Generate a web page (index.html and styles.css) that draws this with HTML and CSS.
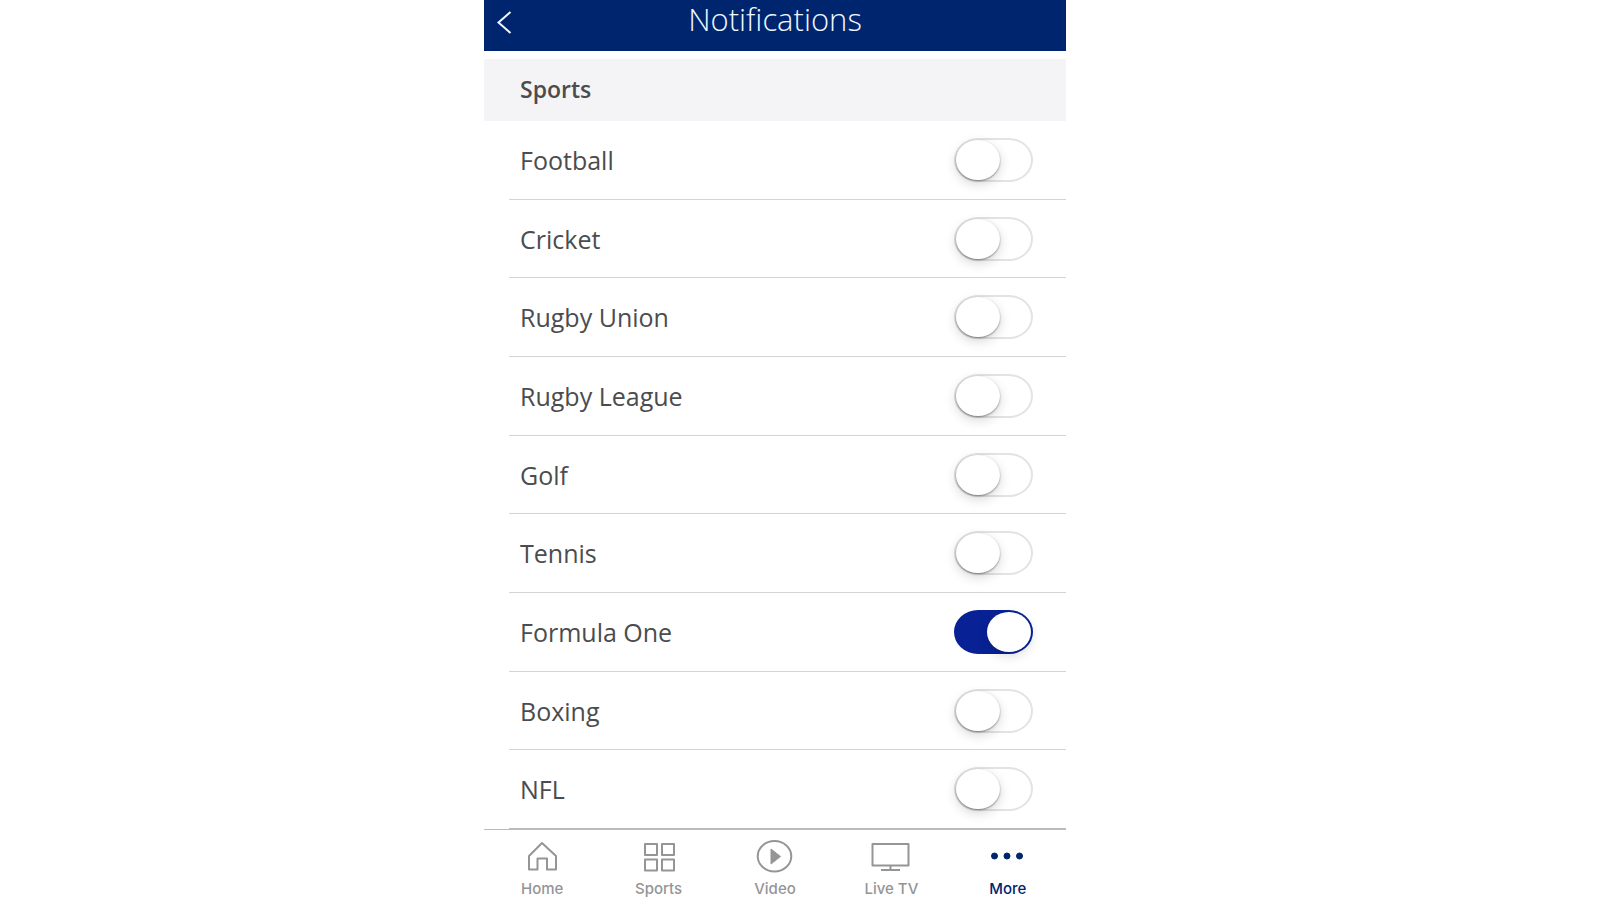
FILE: index.html
```
<!DOCTYPE html>
<html lang="en">
<head>
  <meta charset="UTF-8">
  <meta name="viewport" content="width=device-width, initial-scale=1.0">
  <title>Notifications</title>
  <link rel="stylesheet" href="styles.css">
</head>
<body>
  <div class="app">
    <header class="header">
      <button class="back" type="button" aria-label="Back">
        <svg width="16" height="24" viewBox="0 0 16 24"><path d="M14.5 2 L2.5 12.5 L14.5 23"/></svg>
      </button>
      <h1>Notifications</h1>
    </header>

    <main class="content">
      <h2 class="section-title">Sports</h2>

      <div class="list">
        <div class="row">
          <label for="football">Football</label>
          <input class="switch" type="checkbox" id="football">
        </div>
        <div class="row">
          <label for="cricket">Cricket</label>
          <input class="switch" type="checkbox" id="cricket">
        </div>
        <div class="row">
          <label for="rugby-union">Rugby Union</label>
          <input class="switch" type="checkbox" id="rugby-union">
        </div>
        <div class="row">
          <label for="rugby-league">Rugby League</label>
          <input class="switch" type="checkbox" id="rugby-league">
        </div>
        <div class="row">
          <label for="golf">Golf</label>
          <input class="switch" type="checkbox" id="golf">
        </div>
        <div class="row">
          <label for="tennis">Tennis</label>
          <input class="switch" type="checkbox" id="tennis">
        </div>
        <div class="row">
          <label for="formula-one">Formula One</label>
          <input class="switch" type="checkbox" id="formula-one" checked>
        </div>
        <div class="row">
          <label for="boxing">Boxing</label>
          <input class="switch" type="checkbox" id="boxing">
        </div>
        <div class="row">
          <label for="nfl">NFL</label>
          <input class="switch" type="checkbox" id="nfl">
        </div>
      </div>
    </main>

    <nav class="tabs">
      <a class="tab" href="#home">
        <svg width="40" height="34" viewBox="0 0 40 34">
          <path d="M20 4 L34 17 V30.5 H25 V19.5 H15.5 V30.5 H7 V17 Z"/>
        </svg>
        <span>Home</span>
      </a>
      <a class="tab" href="#sports">
        <svg width="40" height="34" viewBox="0 0 40 34">
          <rect x="6" y="5" width="12" height="11"/>
          <rect x="23" y="5" width="12" height="11"/>
          <rect x="6" y="20.500" width="12" height="11"/>
          <rect x="23" y="20.500" width="12" height="11"/>
        </svg>
        <span>Sports</span>
      </a>
      <a class="tab" href="#video">
        <svg width="40" height="34" viewBox="0 0 40 34">
          <ellipse cx="19.500" cy="17.300" rx="16.800" ry="15.200"/>
          <path class="solid" d="M16 10 L25.500 17.500 L16 25 Z"/>
        </svg>
        <span>Video</span>
      </a>
      <a class="tab" href="#live-tv">
        <svg width="40" height="34" viewBox="0 0 40 34">
          <rect x="1.500" y="5" width="36" height="21.500"/>
          <path d="M19.500 26.500 V31 M10 31 H29"/>
        </svg>
        <span>Live TV</span>
      </a>
      <a class="tab active" href="#more">
        <svg width="40" height="34" viewBox="0 0 40 34">
          <circle class="solid" cx="6.500" cy="17" r="3"/>
          <circle class="solid" cx="19" cy="17" r="3"/>
          <circle class="solid" cx="31.500" cy="17" r="3"/>
        </svg>
        <span>More</span>
      </a>
    </nav>
  </div>
</body>
</html>
```

FILE: styles.css
```
* {
  box-sizing: border-box;
}

body {
  margin: 0;
  display: grid;
  grid-template-columns: 484fr 582fr 534fr;
  background-color: #fff;
  color: #4b4c4e;
  font-family: "Open Sans", "Noto Sans", sans-serif;
}

.app {
  grid-column: 2;
  display: flex;
  flex-direction: column;
  min-height: 100vh;
}

/* Header */
.header {
  display: grid;
  grid-template-columns: 48px 1fr 48px;
  align-items: center;
  height: 51px;
  padding-bottom: 13px;
  background-color: #00256f;
  color: #eef8ff;
}

.header h1 {
  margin: 0;
  font-size: 31px;
  font-weight: 300;
  line-height: 38px;
  text-align: center;
}

.back {
  display: flex;
  padding: 6px 12px 0;
  border: 0;
  background: none;
  color: inherit;
  cursor: pointer;
}

.back svg {
  fill: none;
  stroke: currentColor;
  stroke-width: 2;
}

/* Settings list */
.content {
  display: flex;
  flex-direction: column;
  flex: 1;
  padding-top: 8px;
}

.section-title {
  margin: 0;
  padding: 0 36px 2px;
  background-color: #f4f4f7;
  font-size: 23px;
  font-weight: 600;
  line-height: 60px;
}

.list {
  display: flex;
  flex-direction: column;
  flex: 1;
}

.row {
  display: flex;
  flex: 1;
  align-items: center;
  justify-content: space-between;
  min-height: 64px;
  margin-left: 25px;
  padding: 0 33px 0 11px;
  border-bottom: 1px solid #d3d4d5;
}

.row:last-child {
  border-bottom-color: #bbb;
}

.row label {
  font-size: 25px;
  font-weight: 400;
  line-height: 32px;
}

.switch {
  appearance: none;
  flex: none;
  width: 79px;
  height: 44px;
  margin: 0;
  padding: 0;
  border: 2px solid #e3e3e3;
  border-radius: 24px / 22px;
  background-color: #fff;
  cursor: pointer;
}

.switch::before {
  content: "";
  display: block;
  width: 44px;
  height: 40px;
  border-radius: 50%;
  background-color: #fff;
  box-shadow: 0 1px 2px rgba(0, 0, 0, 0.4), 0 4px 12px rgba(0, 0, 0, 0.16);
}

.switch:checked {
  border-color: #082296;
  background-color: #082296;
}

.switch:checked::before {
  margin-left: auto;
  box-shadow: 0 4px 12px rgba(0, 0, 0, 0.15);
}

/* Bottom tab bar */
.tabs {
  display: grid;
  grid-template-columns: repeat(5, 1fr);
  padding: 9px 0 3px;
  border-top: 1px solid #bbb;
}

.tab {
  display: flex;
  flex-direction: column;
  align-items: center;
  gap: 8px;
  color: #959597;
  font-family: Inter, sans-serif;
  font-size: 15px;
  font-weight: 500;
  line-height: 16px;
  text-decoration: none;
}

.tab svg {
  fill: none;
  stroke: currentColor;
  stroke-width: 2;
  stroke-linejoin: round;
}

.tab .solid {
  fill: currentColor;
  stroke-width: 1;
}

.tab.active {
  color: #00256f;
}
```
